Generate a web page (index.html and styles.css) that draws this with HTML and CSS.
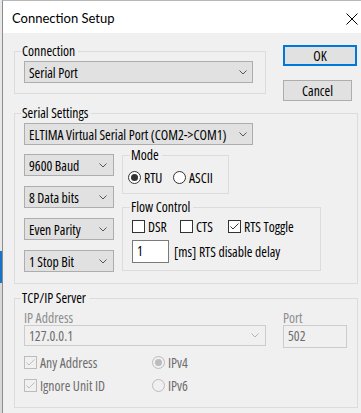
FILE: index.html
```html
<!DOCTYPE html>
<html>
<head>
<meta charset="utf-8">
<link rel="stylesheet" href="styles.css">
</head>
<body>
<div class="screen">
  <div class="backdrop">
    <div class="bd-top"></div>
    <div class="bd-blue"></div>
    <div class="bd-rest"></div>
  </div>
  <div class="window">
    <div class="titlebar">
      <span class="title">Connection Setup</span>
      <svg class="close" width="12" height="12" viewBox="0 0 12 12"><path d="M0.5 0.5 L11.5 11.5 M11.5 0.5 L0.5 11.5" stroke="#000" stroke-width="1" fill="none"/></svg>
    </div>
    <div class="body">
      <div class="top-row">
        <fieldset class="group g-conn">
          <legend>Connection</legend>
          <div class="combo w-wide"><span>Serial Port</span><svg class="chev" width="8" height="5" viewBox="0 0 8 5"><path d="M0.5 0.5 L4 4 L7.5 0.5" stroke="#555" fill="none"/></svg></div>
        </fieldset>
        <div class="buttons">
          <div class="btn btn-default">OK</div>
          <div class="btn btn-cancel">Cancel</div>
        </div>
      </div>

      <fieldset class="group g-serial">
        <legend>Serial Settings</legend>
        <div class="combo w-wide"><span>ELTIMA Virtual Serial Port (COM2-&gt;COM1)</span><svg class="chev" width="8" height="5" viewBox="0 0 8 5"><path d="M0.5 0.5 L4 4 L7.5 0.5" stroke="#555" fill="none"/></svg></div>
        <div class="serial-row">
          <div class="combo-col">
            <div class="combo w-small"><span>9600 Baud</span><svg class="chev" width="8" height="5" viewBox="0 0 8 5"><path d="M0.5 0.5 L4 4 L7.5 0.5" stroke="#555" fill="none"/></svg></div>
            <div class="combo w-small"><span>8 Data bits</span><svg class="chev" width="8" height="5" viewBox="0 0 8 5"><path d="M0.5 0.5 L4 4 L7.5 0.5" stroke="#555" fill="none"/></svg></div>
            <div class="combo w-small"><span>Even Parity</span><svg class="chev" width="8" height="5" viewBox="0 0 8 5"><path d="M0.5 0.5 L4 4 L7.5 0.5" stroke="#555" fill="none"/></svg></div>
            <div class="combo w-small"><span>1 Stop Bit</span><svg class="chev" width="8" height="5" viewBox="0 0 8 5"><path d="M0.5 0.5 L4 4 L7.5 0.5" stroke="#555" fill="none"/></svg></div>
          </div>
          <div class="right-col">
            <fieldset class="group g-mode">
              <legend>Mode</legend>
              <div class="opt-row">
                <label class="opt w-rtu"><span class="radio on"></span>RTU</label>
                <label class="opt"><span class="radio"></span>ASCII</label>
              </div>
            </fieldset>
            <fieldset class="group g-flow">
              <legend>Flow Control</legend>
              <div class="opt-row">
                <label class="opt w-chk"><span class="check"></span>DSR</label>
                <label class="opt w-chk"><span class="check"></span>CTS</label>
                <label class="opt"><span class="check"><svg width="11" height="11" viewBox="0 0 11 11"><path d="M1.5 5.5 L4 8 L9.5 2.5" stroke="#333" stroke-width="1" fill="none"/></svg></span>RTS Toggle</label>
              </div>
              <div class="delay-row">
                <div class="textbox tb-delay">1</div>
                <span>[ms] RTS disable delay</span>
              </div>
            </fieldset>
          </div>
        </div>
      </fieldset>

      <fieldset class="group g-tcp">
        <legend>TCP/IP Server</legend>
        <div class="tcp-row">
          <div class="ip-col">
            <div class="dlabel">IP Address</div>
            <div class="combo dis w-ip"><span class="ip-text">127.0.0.1</span><span class="ip-arrow"><svg class="chev" width="8" height="5" viewBox="0 0 8 5"><path d="M0.5 0.5 L4 4 L7.5 0.5" stroke="#b5b5b5" fill="none"/></svg></span></div>
          </div>
          <div class="port-col">
            <div class="dlabel">Port</div>
            <div class="textbox dis tb-port">502</div>
          </div>
        </div>
        <div class="dis-row first">
          <label class="opt dis w-any"><span class="check dis"><svg width="11" height="11" viewBox="0 0 11 11"><path d="M1.5 5.5 L4 8 L9.5 2.5" stroke="#bcbcbc" stroke-width="1" fill="none"/></svg></span>Any Address</label>
          <label class="opt dis"><span class="radio dis on"></span>IPv4</label>
        </div>
        <div class="dis-row">
          <label class="opt dis w-any"><span class="check dis"><svg width="11" height="11" viewBox="0 0 11 11"><path d="M1.5 5.5 L4 8 L9.5 2.5" stroke="#bcbcbc" stroke-width="1" fill="none"/></svg></span>Ignore Unit ID</label>
          <label class="opt dis"><span class="radio dis"></span>IPv6</label>
        </div>
      </fieldset>
    </div>
  </div>
</div>
</body>
</html>
```
FILE: styles.css
```css
html, body {
  margin: 0;
  padding: 0;
  background: #f0f0f0;
}
body {
  font-family: "Open Sans", "Liberation Sans", Arial, sans-serif;
  font-size: 13.7px;
  font-stretch: 75%;
  color: #000;
  overflow: hidden;
  width: 361px;
  height: 413px;
}
.screen {
  display: flex;
  height: 413px;
}
.backdrop {
  width: 2px;
  display: flex;
  flex-direction: column;
}
.bd-top { height: 251px; background: #e8e8e8; }
.bd-blue { height: 32px; background: #1774c9; }
.bd-rest { flex: 1; background: #d8d8d8; }

.window {
  flex: 1;
  border-left: 1px solid #8c8c8c;
  border-top: 1px solid #b8b8b8;
  background: #f0f0f0;
}
.titlebar {
  height: 32px;
  background: #fff;
  display: flex;
  align-items: center;
  justify-content: space-between;
  padding: 0 0 0 9px;
}
.title {
  font-family: Lato, "Open Sans", sans-serif;
  font-size: 13px;
  font-stretch: 100%;
  margin-top: 2px;
}
.close {
  margin-right: 3px;
  margin-top: 3px;
}
.body {
  padding: 10px 0 0 11px;
}

/* group boxes */
.group {
  margin: 0;
  border: 1px solid #dcdcdc;
  min-width: 0;
  box-sizing: border-box;
  padding: 2px 12px 10px 9px;
}
.group legend {
  padding: 0 3px 0 1px;
  margin-left: -3px;
  line-height: 16px;
  height: 16px;
}
.top-row {
  display: flex;
  align-items: flex-start;
}
.g-conn { width: 252px; }
.buttons {
  display: flex;
  flex-direction: column;
  gap: 14px;
  margin-left: 17px;
  margin-top: 2px;
  margin-bottom: -8px;
}
.btn {
  height: 21px;
  box-sizing: border-box;
  border: 1px solid #adadad;
  background: #e1e1e1;
  display: flex;
  align-items: center;
  justify-content: center;
}
.btn-default {
  width: 74px;
  border: 2px solid #0078d7;
}
.btn-cancel { width: 69px; }

.g-serial {
  width: 344px;
  margin-top: 11px;
  padding-bottom: 11px;
}
.g-tcp {
  width: 344px;
  margin-top: 6px;
  padding: 4px 12px 14px 9px;
}

/* combos */
.combo {
  height: 22px;
  box-sizing: border-box;
  border: 1px solid #adadad;
  background: #e1e1e1;
  display: flex;
  align-items: center;
  justify-content: space-between;
  padding: 0 5px 0 4px;
  white-space: nowrap;
}
.w-wide { width: 229px; }
.w-small { width: 90px; padding-right: 6px; }
.chev { flex: none; }

.serial-row {
  display: flex;
  align-items: flex-start;
  margin-top: 2px;
}
.combo-col {
  display: flex;
  flex-direction: column;
  gap: 10px;
  padding-top: 7px;
}
.right-col {
  margin-left: 8px;
  display: flex;
  flex-direction: column;
  gap: 5px;
}
.g-mode {
  width: 107px;
  padding: 6px 4px 8px 5px;
}
.g-mode legend { margin-left: 2px; }
.g-flow {
  width: 199px;
  padding: 3px 4px 7px 9px;
}
.g-flow legend { margin-left: -2px; }

.opt-row {
  display: flex;
  align-items: center;
  height: 16px;
}
.opt {
  display: inline-flex;
  align-items: center;
  gap: 3px;
  height: 16px;
  white-space: nowrap;
}
.w-rtu { width: 45px; }
.w-chk { width: 48px; }

.radio {
  width: 13px;
  height: 13px;
  box-sizing: border-box;
  border: 1px solid #333;
  border-radius: 50%;
  background: #fff;
  display: flex;
  align-items: center;
  justify-content: center;
}
.radio.on::after {
  content: "";
  width: 7px;
  height: 7px;
  border-radius: 50%;
  background: #333;
}
.check {
  width: 13px;
  height: 13px;
  box-sizing: border-box;
  border: 1px solid #333;
  background: #fff;
  display: flex;
  align-items: center;
  justify-content: center;
}
.check svg { display: block; }

.delay-row {
  display: flex;
  align-items: center;
  gap: 5px;
  margin-top: 6px;
}
.textbox {
  height: 23px;
  box-sizing: border-box;
  border: 1px solid #7a7a7a;
  background: #fff;
  padding: 1px 0 0 4px;
  line-height: 18px;
}
.tb-delay { width: 37px; }

/* disabled */
.dlabel {
  color: #8d8d8d;
  line-height: 15px;
}
.dis { color: #6d6d6d; }
.tcp-row {
  display: flex;
  align-items: flex-start;
}
.ip-col { width: 242px; }
.port-col { margin-left: 17px; }
.combo.dis {
  border-color: #cccccc;
  background: #f0f0f0;
  padding: 0 1px 0 0;
  height: 21px;
}
.w-ip { width: 242px; }
.ip-text {
  flex: 1;
  padding-left: 4px;
  align-self: stretch;
  display: flex;
  align-items: center;
  margin: 1px 0;
}
.ip-arrow {
  width: 18px;
  display: flex;
  justify-content: center;
}
.textbox.dis {
  border-color: #cccccc;
  background: #f0f0f0;
}
.tb-port { width: 64px; }

.dis-row {
  display: flex;
  align-items: center;
  height: 16px;
  margin-top: 7px;
}
.dis-row.first { margin-top: 6px; }
.w-any { width: 128px; }
.check.dis {
  border-color: #bcbcbc;
  background: #f0f0f0;
}
.radio.dis {
  border-color: #bcbcbc;
  background: #f0f0f0;
}
.radio.dis.on::after { background: #bcbcbc; }
```
